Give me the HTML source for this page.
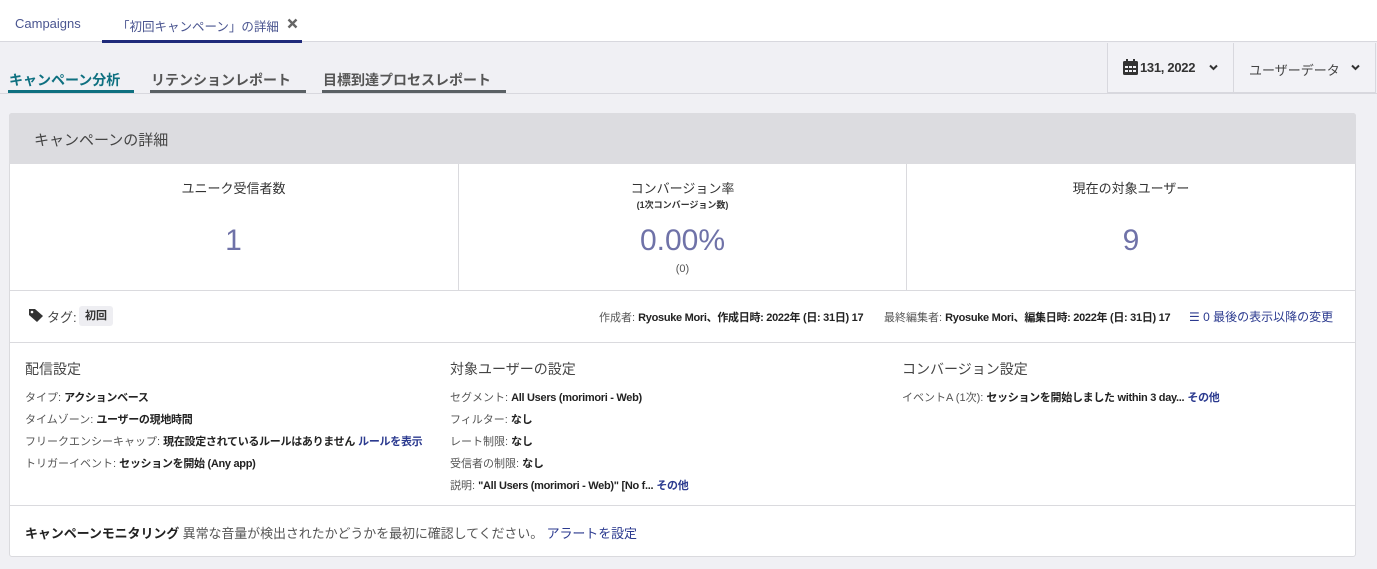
<!DOCTYPE html>
<html><head><meta charset="utf-8"><style>
*{box-sizing:border-box;margin:0;padding:0}
body{width:1377px;height:569px;background:#f0f0f4;font-family:"Liberation Sans","Noto Sans CJK JP",sans-serif;position:relative;overflow:hidden;color:#333}
.a{position:absolute;white-space:nowrap}
.b{font-weight:bold;color:#222}
.s .b{letter-spacing:-0.3px}
.l{color:#2b3a8f}
.s{font-size:11px;color:#555}
</style></head><body>
<div class="a" style="left:0;top:0;width:1377px;height:42px;background:#fff;border-bottom:1px solid #d8d8de"></div>
<div class="a" style="left:15px;top:16px;font-size:13px;color:#4a5590">Campaigns</div>
<div class="a" style="left:117px;top:16px;font-size:12.5px;color:#4a5590">「初回キャンペーン」の詳細</div>
<svg class="a" style="left:287px;top:18px" width="11" height="11" viewBox="0 0 11 11"><path d="M1.5 1.5l8 8M9.5 1.5l-8 8" stroke="#666" stroke-width="2.4"/></svg>
<div class="a" style="left:102px;top:40px;width:200px;height:3px;background:#1f2a7a"></div>

<div class="a" style="left:0;top:93px;width:1377px;height:1px;background:#d8d8de"></div>
<div class="a" style="left:9px;top:70px;font-size:14px;font-weight:bold;color:#0e7080">キャンペーン分析</div>
<div class="a" style="left:8px;top:90px;width:126px;height:3px;background:#0e7080"></div>
<div class="a" style="left:151px;top:70px;font-size:14px;font-weight:bold;color:#555">リテンションレポート</div>
<div class="a" style="left:150px;top:90px;width:156px;height:3px;background:#5a6064"></div>
<div class="a" style="left:323px;top:70px;font-size:14px;font-weight:bold;color:#555">目標到達プロセスレポート</div>
<div class="a" style="left:322px;top:90px;width:184px;height:3px;background:#5a6064"></div>

<div class="a" style="left:1107px;top:43px;width:269px;height:50px;border:1px solid #d8d8de;border-top:none;background:#f2f2f6"></div>
<div class="a" style="left:1233px;top:43px;width:1px;height:50px;background:#d8d8de"></div>
<svg class="a" style="left:1123px;top:59px" width="15" height="16" viewBox="0 0 15 16"><rect x="0" y="2" width="15" height="14" rx="1.5" fill="#333"/><rect x="3" y="0" width="2" height="4" fill="#333"/><rect x="10" y="0" width="2" height="4" fill="#333"/><g fill="#f2f2f6"><rect x="2" y="7" width="3" height="2"/><rect x="6" y="7" width="3" height="2"/><rect x="10" y="7" width="3" height="2"/><rect x="2" y="11" width="3" height="2"/><rect x="6" y="11" width="3" height="2"/><rect x="10" y="11" width="3" height="2"/></g></svg>
<div class="a" style="left:1140px;top:60px;font-size:13px;font-weight:bold;color:#333;letter-spacing:-0.3px">131, 2022</div>
<svg class="a" style="left:1209px;top:64px" width="9" height="7" viewBox="0 0 9 7"><path d="M1 1.5l3.5 3.5 3.5-3.5" stroke="#333" stroke-width="2" fill="none"/></svg>
<div class="a" style="left:1249px;top:60px;font-size:13px;color:#444">ユーザーデータ</div>
<svg class="a" style="left:1351px;top:64px" width="9" height="7" viewBox="0 0 9 7"><path d="M1 1.5l3.5 3.5 3.5-3.5" stroke="#333" stroke-width="2" fill="none"/></svg>

<div class="a" style="left:9px;top:113px;width:1347px;height:444px;background:#fff;border:1px solid #dadade;border-radius:3px"></div>
<div class="a" style="left:9px;top:113px;width:1347px;height:51px;background:#dcdce0;border-radius:3px 3px 0 0"></div>
<div class="a" style="left:34px;top:129px;font-size:15px;color:#444">キャンペーンの詳細</div>

<div class="a" style="left:458px;top:164px;width:1px;height:126px;background:#dadade"></div>
<div class="a" style="left:906px;top:164px;width:1px;height:126px;background:#dadade"></div>
<div class="a" style="left:9px;top:290px;width:1347px;height:1px;background:#dadade"></div>
<div class="a" style="left:9px;top:178px;width:449px;text-align:center;font-size:13px;color:#333">ユニーク受信者数</div>
<div class="a" style="left:9px;top:224px;width:449px;text-align:center;font-size:30px;color:#6f72a8">1</div>
<div class="a" style="left:459px;top:178px;width:447px;text-align:center;font-size:13px;color:#333">コンバージョン率</div>
<div class="a" style="left:459px;top:198px;width:447px;text-align:center;font-size:9px;font-weight:bold;color:#333">(1次コンバージョン数)</div>
<div class="a" style="left:459px;top:224px;width:447px;text-align:center;font-size:30px;color:#6f72a8">0.00%</div>
<div class="a" style="left:459px;top:263px;width:447px;text-align:center;font-size:11px;color:#555">(0)</div>
<div class="a" style="left:907px;top:178px;width:448px;text-align:center;font-size:13px;color:#333">現在の対象ユーザー</div>
<div class="a" style="left:907px;top:224px;width:448px;text-align:center;font-size:30px;color:#6f72a8">9</div>

<svg class="a" style="left:28px;top:308px" width="16" height="15" viewBox="0 0 16 15"><path d="M1 1h6l8 7-6 6-8-7z" fill="#333"/><circle cx="4" cy="4" r="1.3" fill="#fff"/></svg>
<div class="a" style="left:47px;top:307px;font-size:13px;color:#444">タグ:</div>
<div class="a" style="left:79px;top:306px;width:34px;height:20px;background:#eeeef2;border-radius:3px;font-size:11px;font-weight:bold;text-align:center;line-height:20px">初回</div>
<div class="a s" style="left:599px;top:309px">作成者: <span class="b">Ryosuke Mori、作成日時: 2022年 (日: 31日) 17</span></div>
<div class="a s" style="left:884px;top:309px">最終編集者: <span class="b">Ryosuke Mori、編集日時: 2022年 (日: 31日) 17</span></div>
<div class="a" style="left:1189px;top:308px;font-size:12px;color:#2b3a8f">☰ 0 最後の表示以降の変更</div>
<div class="a" style="left:9px;top:342px;width:1347px;height:1px;background:#dadade"></div>

<div class="a" style="left:25px;top:359px;font-size:14px;color:#444">配信設定</div>
<div class="a s" style="left:25px;top:389px">タイプ: <span class="b">アクションベース</span></div>
<div class="a s" style="left:25px;top:411px">タイムゾーン: <span class="b">ユーザーの現地時間</span></div>
<div class="a s" style="left:25px;top:433px">フリークエンシーキャップ: <span class="b">現在設定されているルールはありません</span> <span class="b l">ルールを表示</span></div>
<div class="a s" style="left:25px;top:455px">トリガーイベント: <span class="b">セッションを開始 (Any app)</span></div>

<div class="a" style="left:450px;top:359px;font-size:14px;color:#444">対象ユーザーの設定</div>
<div class="a s" style="left:450px;top:389px">セグメント: <span class="b">All Users (morimori - Web)</span></div>
<div class="a s" style="left:450px;top:411px">フィルター: <span class="b">なし</span></div>
<div class="a s" style="left:450px;top:433px">レート制限: <span class="b">なし</span></div>
<div class="a s" style="left:450px;top:455px">受信者の制限: <span class="b">なし</span></div>
<div class="a s" style="left:450px;top:477px">説明: <span class="b">"All Users (morimori - Web)" [No f...</span> <span class="b l">その他</span></div>

<div class="a" style="left:902px;top:359px;font-size:14px;color:#444">コンバージョン設定</div>
<div class="a s" style="left:902px;top:389px">イベントA (1次): <span class="b">セッションを開始しました within 3 day...</span> <span class="b l">その他</span></div>

<div class="a" style="left:9px;top:505px;width:1347px;height:1px;background:#dadade"></div>
<div class="a" style="left:25px;top:523px;font-size:13px;color:#555;letter-spacing:-0.1px"><span class="b">キャンペーンモニタリング</span> 異常な音量が検出されたかどうかを最初に確認してください。 <span class="l">アラートを設定</span></div>
</body></html>
